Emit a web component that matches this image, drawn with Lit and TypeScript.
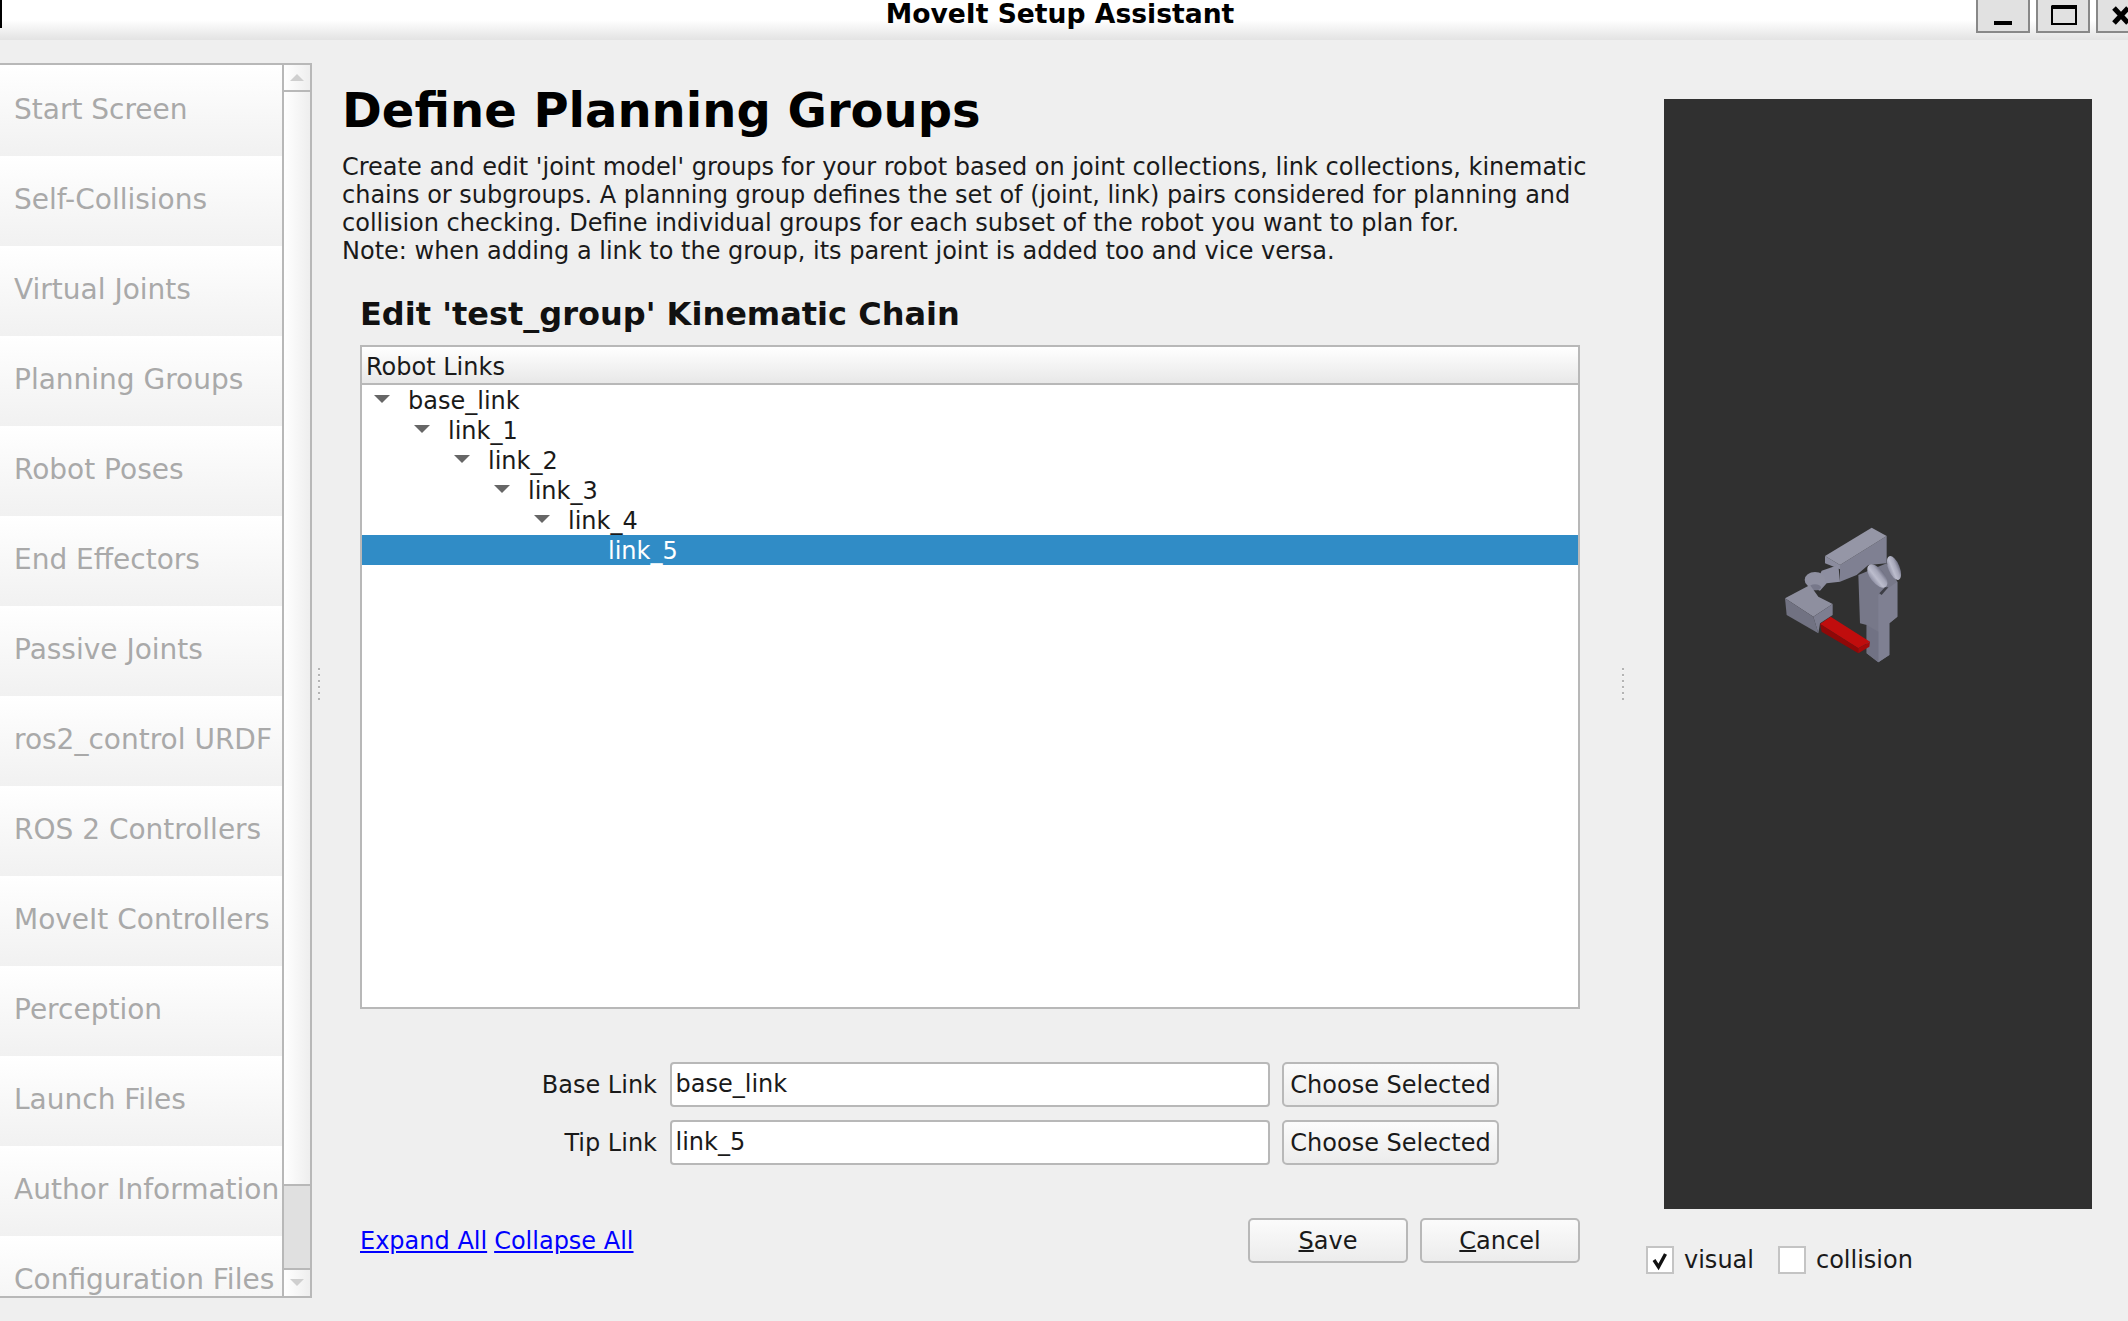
import { LitElement, html, css, svg } from "lit";
import { customElement } from "lit/decorators.js";

const NAV = ["Start Screen","Self-Collisions","Virtual Joints","Planning Groups","Robot Poses","End Effectors","Passive Joints","ros2_control URDF","ROS 2 Controllers","MoveIt Controllers","Perception","Launch Files","Author Information","Configuration Files"];
const TREE = ["base_link","link_1","link_2","link_3","link_4","link_5"];

const poly = (pts: string, fill: string) => svg`<polygon points=${pts} fill=${fill}></polygon>`;

const robot = svg`<svg class="robot" viewBox="0 0 540 540" width="180" height="180">
  <defs>
    <linearGradient id="cyl" x1="0" y1="0" x2="1" y2="0">
      <stop offset="0" stop-color="#8f90a4"></stop>
      <stop offset="0.35" stop-color="#bcbdcd"></stop>
      <stop offset="0.7" stop-color="#a5a6b8"></stop>
      <stop offset="1" stop-color="#6c6d80"></stop>
    </linearGradient>
  </defs>
  ${poly("295,225 380,190 412,245 412,350 388,370 388,465 355,487 320,460 320,375 300,370", "#777889")}
  ${poly("355,285 412,245 412,350 388,370 388,465 355,487", "#7f8092")}
  ${poly("320,375 355,395 355,487 320,460", "#717284")}
  ${poly("195,168 240,195 240,208 195,190", "#8b8c9e")}
  ${poly("185,212 235,195 240,245 200,250 180,272 160,265", "#8d8ea0")}
  ${poly("240,195 380,108 380,190 325,195 290,225 240,245", "#7f8092")}
  ${poly("195,168 335,83 380,108 240,195", "#9596a6")}
  <ellipse cx="165" cy="240" rx="31" ry="24" fill="#8f90a1"></ellipse>
  <ellipse cx="165" cy="262" rx="18" ry="9" fill="#77788a"></ellipse>
  ${poly("75,295 150,255 175,290 218,312 160,350", "#8e8f9f")}
  ${poly("75,295 160,350 175,400 80,345", "#717282")}
  ${poly("160,350 218,312 218,345 180,370 175,400", "#7d7e90")}
  <ellipse cx="402" cy="204" rx="17" ry="38" transform="rotate(-22 402 204)" fill="url(#cyl)"></ellipse>
  <ellipse cx="352" cy="228" rx="21" ry="41" transform="rotate(-38 352 228)" fill="url(#cyl)"></ellipse>
  ${poly("358,280 375,262 385,262 365,285", "#3d3e46")}
  ${poly("180,372 212,350 330,425 295,445", "#c00d0d")}
  ${poly("180,372 295,445 295,460 185,395", "#8f0808")}
  ${poly("295,445 330,425 328,440 295,460", "#a50a0a")}
</svg>`;

@customElement("app-root")
export class AppRoot extends LitElement {
  static styles = css`
    :host { display: block; width: 2128px; height: 1321px; overflow: hidden; background: #efefef; color: #1a1a1a; font-family: "DejaVu Sans", sans-serif; font-size: 24px; }
    .titlebar { height: 40px; position: relative; display: flex; justify-content: center; background: linear-gradient(#fff 0, #fff 50%, #e3e3e3 100%); overflow: hidden; }
    .title { font-weight: 700; font-size: 26.6px; line-height: 28px; color: #000; margin-left: -8px; }
    .mark { position: absolute; left: 0; top: 0; width: 2px; height: 28px; background: #000; }
    .winbtns { position: absolute; left: 1976px; top: 0; display: flex; gap: 6px; }
    .winbtn { height: 33px; box-sizing: border-box; border: 2px solid #888; border-top: 0; background: #e1e1e1; position: relative; flex: none; width: 54px; }
    .winbtn svg { position: absolute; left: 0; top: 0; }
    .main { display: flex; height: 1281px; }
    .side { margin-top: 23px; width: 312px; height: 1235px; box-sizing: border-box; border: 2px solid #b8b8b8; border-left: 0; display: flex; flex: none; background: #fff; }
    .navlist { flex: 1; min-width: 0; overflow: hidden; border-right: 2px solid #b8b8b8; padding-top: 1px; }
    .nav { height: 90px; box-sizing: border-box; padding: 0 0 4px 14px; display: flex; align-items: center; white-space: nowrap; font-size: 28px; color: #a9a9a9; background: linear-gradient(#fff, #f1f1f1); }
    .scroll { width: 26px; display: flex; flex-direction: column; flex: none; background: linear-gradient(90deg, #fff, #eee); }
    .sbtn { height: 27px; box-sizing: border-box; display: flex; align-items: center; justify-content: center; flex: none; }
    .sbtn.up { border-bottom: 2px solid #b8b8b8; }
    .sbtn.down { border-top: 2px solid #b8b8b8; height: 28px; }
    .track { flex: 1; display: flex; flex-direction: column; justify-content: flex-end; }
    .thumb { height: 84px; background: #e0e0e0; border-top: 2px solid #b8b8b8; box-sizing: border-box; }
    .split { width: 30px; flex: none; display: flex; align-items: center; padding: 6px 0 0 6px; box-sizing: border-box; }
    .dots { width: 2px; height: 32px; background: repeating-linear-gradient(#b4b4b4 0 2px, #f6f6f6 2px 3px, transparent 3px 6px); }
    .content { width: 1266px; flex: none; box-sizing: border-box; padding-top: 42px; }
    h1 { margin: 0; font-size: 48px; line-height: 56px; font-weight: 700; color: #000; white-space: nowrap; }
    .desc { margin: 0; padding-top: 15px; line-height: 28px; width: 1290px; white-space: nowrap; }
    .editor { margin-left: 18px; width: 1220px; }
    h2 { margin: 0; padding-top: 29px; font-size: 32px; line-height: 40px; font-weight: 700; color: #111; white-space: nowrap; }
    .tree { margin-top: 11px; height: 664px; box-sizing: border-box; border: 2px solid #b8b8b8; background: #fff; }
    .thead { height: 38px; box-sizing: border-box; border-bottom: 2px solid #b8b8b8; background: linear-gradient(#fff, #e8e8e8); padding-left: 4px; line-height: 40px; }
    .row { height: 30px; line-height: 32px; position: relative; white-space: nowrap; }
    .row.sel { background: #308cc6; color: #fff; }
    .arrow { position: absolute; top: 9px; }
    .form { margin-top: 53px; display: grid; grid-template-columns: 297px 600px 217px; column-gap: 12.5px; row-gap: 13px; align-items: center; justify-content: start; }
    .lbl { text-align: right; }
    .input { height: 45px; box-sizing: border-box; border: 2px solid #b8b8b8; border-radius: 4px; background: #fff; padding-left: 4px; line-height: 41px; }
    .btn { height: 45px; box-sizing: border-box; border: 2px solid #b8b8b8; border-radius: 5px; background: linear-gradient(#fbfbfb, #ececec); display: flex; align-items: center; justify-content: center; white-space: nowrap; }
    .actions { margin-top: 53px; display: flex; align-items: center; }
    .links { flex: 1; display: flex; gap: 7px; }
    .links a { color: #0000ff; text-decoration: underline; }
    .actions .btn { width: 160px; margin-left: 12px; }
    u { text-decoration-thickness: 2px; }
    .split2 { width: 56px; padding-left: 14px; }
    .right { padding-top: 59px; flex: none; width: 428px; }
    .view { width: 428px; height: 1110px; background: #303030; position: relative; overflow: hidden; }
    .robot { position: absolute; left: 96px; top: 401px; }
    .checks { display: flex; align-items: center; margin: 37px 0 0 -18px; }
    .box { width: 28px; height: 28px; box-sizing: border-box; border: 2px solid #c4c4c4; background: #fff; flex: none; }
    .check { display: flex; align-items: center; gap: 10px; margin-right: 24px; }
    .box svg { display: block; }
  `;

  render() {
    return html`
      <div class="titlebar">
        <div class="mark"></div>
        <div class="title">MoveIt Setup Assistant</div>
        <div class="winbtns">
          <div class="winbtn"><svg width="50" height="33"><rect x="16" y="21" width="18" height="4" fill="#000"/></svg></div>
          <div class="winbtn"><svg width="50" height="33"><path d="M14 6.5H38V24H14Z" fill="none" stroke="#000" stroke-width="2"/><rect x="14" y="5" width="25" height="4" fill="#000"/></svg></div>
          <div class="winbtn"><svg width="50" height="33"><path d="M16 8L30 23M30 8L16 23" stroke="#000" stroke-width="5" fill="none"/></svg></div>
        </div>
      </div>
      <div class="main">
        <div class="side">
          <div class="navlist">${NAV.map((n) => html`<div class="nav">${n}</div>`)}</div>
          <div class="scroll">
            <div class="sbtn up"><svg width="14" height="8"><path d="M7 0L14 7H0Z" fill="#cfcfcf"/></svg></div>
            <div class="track"><div class="thumb"></div></div>
            <div class="sbtn down"><svg width="14" height="8"><path d="M0 0H14L7 7Z" fill="#cfcfcf"/></svg></div>
          </div>
        </div>
        <div class="split"><div class="dots"></div></div>
        <div class="content">
          <h1>Define Planning Groups</h1>
          <p class="desc">Create and edit 'joint model' groups for your robot based on joint collections, link collections, kinematic<br>chains or subgroups. A planning group defines the set of (joint, link) pairs considered for planning and<br>collision checking. Define individual groups for each subset of the robot you want to plan for.<br>Note: when adding a link to the group, its parent joint is added too and vice versa.</p>
          <div class="editor">
            <h2>Edit 'test_group' Kinematic Chain</h2>
            <div class="tree">
              <div class="thead">Robot Links</div>
              ${TREE.map((t, i) => html`<div class="row ${i === 5 ? "sel" : ""}" style="padding-left:${46 + i * 40}px">
                ${i < 5 ? html`<svg class="arrow" style="left:${12 + i * 40}px" width="16" height="10"><path d="M0 1H16L8 9Z" fill="#666"/></svg>` : ""}${t}</div>`)}
            </div>
            <div class="form">
              <div class="lbl">Base Link</div><div class="input">base_link</div><div class="btn">Choose Selected</div>
              <div class="lbl">Tip Link</div><div class="input">link_5</div><div class="btn">Choose Selected</div>
            </div>
            <div class="actions">
              <div class="links"><a>Expand All</a><a>Collapse All</a></div>
              <div class="btn"><span><u>S</u>ave</span></div>
              <div class="btn"><span><u>C</u>ancel</span></div>
            </div>
          </div>
        </div>
        <div class="split split2"><div class="dots"></div></div>
        <div class="right">
          <div class="view">${robot}</div>
          <div class="checks">
            <div class="check"><div class="box"><svg width="24" height="24"><path d="M6 12L10.5 19L17.5 6" fill="none" stroke="#111" stroke-width="3.4"/></svg></div>visual</div>
            <div class="check"><div class="box"></div>collision</div>
          </div>
        </div>
      </div>
    `;
  }
}
